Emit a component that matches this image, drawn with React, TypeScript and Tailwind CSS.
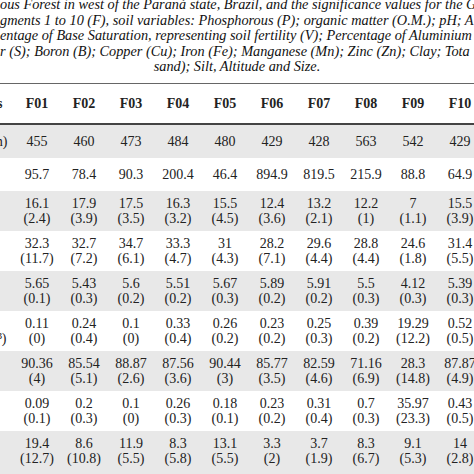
import React from "react"

const cols = ["F01", "F02", "F03", "F04", "F05", "F06", "F07", "F08", "F09", "F10"]

type Row = { label: string; pad: string; tall: boolean; shade: boolean; cells: string[][] }

const rows: Row[] = [
    { label: "Altitude (m)", pad: "pr-[6px]", tall: false, shade: true, cells: ["455", "460", "473", "484", "480", "429", "428", "563", "542", "429"].map((v) => [v]) },
    { label: "Size (ha)", pad: "pr-[18px]", tall: false, shade: false, cells: ["95.7", "78.4", "90.3", "200.4", "46.4", "894.9", "819.5", "215.9", "88.8", "64.9"].map((v) => [v]) },
    { label: "P (mg/dm³)", pad: "pr-[18px]", tall: true, shade: true, cells: [["16.1", "(2.4)"], ["17.9", "(3.9)"], ["17.5", "(3.5)"], ["16.3", "(3.2)"], ["15.5", "(4.5)"], ["12.4", "(3.6)"], ["13.2", "(2.1)"], ["12.2", "(1)"], ["7", "(1.1)"], ["15.5", "(3.9)"]] },
    { label: "O.M. (g/dm³)", pad: "pr-[18px]", tall: true, shade: false, cells: [["32.3", "(11.7)"], ["32.7", "(7.2)"], ["34.7", "(6.1)"], ["33.3", "(4.7)"], ["31", "(4.3)"], ["28.2", "(7.1)"], ["29.6", "(4.4)"], ["28.8", "(4.4)"], ["24.6", "(1.8)"], ["31.4", "(5.5)"]] },
    { label: "pH", pad: "pr-[18px]", tall: true, shade: true, cells: [["5.65", "(0.1)"], ["5.43", "(0.3)"], ["5.6", "(0.2)"], ["5.51", "(0.2)"], ["5.67", "(0.3)"], ["5.89", "(0.2)"], ["5.91", "(0.2)"], ["5.5", "(0.3)"], ["4.12", "(0.3)"], ["5.39", "(0.3)"]] },
    { label: "Al (cmolc/dm³)", pad: "pr-[7px]", tall: true, shade: false, cells: [["0.11", "(0)"], ["0.24", "(0.4)"], ["0.1", "(0)"], ["0.33", "(0.4)"], ["0.26", "(0.2)"], ["0.23", "(0.2)"], ["0.25", "(0.3)"], ["0.39", "(0.2)"], ["19.29", "(12.2)"], ["0.52", "(0.5)"]] },
    { label: "V (%)", pad: "pr-[18px]", tall: true, shade: true, cells: [["90.36", "(4)"], ["85.54", "(5.1)"], ["88.87", "(2.6)"], ["87.56", "(3.6)"], ["90.44", "(3)"], ["85.77", "(3.5)"], ["82.59", "(4.6)"], ["71.16", "(6.9)"], ["28.3", "(14.8)"], ["87.87", "(4.9)"]] },
    { label: "m (%)", pad: "pr-[18px]", tall: true, shade: false, cells: [["0.09", "(0.1)"], ["0.2", "(0.3)"], ["0.1", "(0)"], ["0.26", "(0.3)"], ["0.18", "(0.1)"], ["0.23", "(0.2)"], ["0.31", "(0.4)"], ["0.7", "(0.3)"], ["35.97", "(23.3)"], ["0.43", "(0.5)"]] },
    { label: "S (mg/dm³)", pad: "pr-[18px]", tall: true, shade: true, cells: [["19.4", "(12.7)"], ["8.6", "(10.8)"], ["11.9", "(5.5)"], ["8.3", "(5.8)"], ["13.1", "(5.5)"], ["3.3", "(2)"], ["3.7", "(1.9)"], ["8.3", "(6.7)"], ["9.1", "(5.3)"], ["14", "(2.8)"]] },
]

const caption = [
    "ous Forest in west of the Paraná state, Brazil, and the significance values for the G",
    "gments 1 to 10 (F), soil variables: Phosphorous (P); organic matter (O.M.); pH; A",
    "entage of Base Saturation, representing soil fertility (V); Percentage of Aluminium",
    "r (S); Boron (B); Copper (Cu); Iron (Fe); Manganese (Mn); Zinc (Zn); Clay; Tota",
]

export default function App() {
    return (
        <div className="h-[474px] w-[474px] overflow-hidden bg-white font-['Liberation_Serif',serif] text-[14px] text-[#222]">
            {/* ── Caption ─────────────────────────────────────────── */}
            <div className="mt-[-3px] text-[14.3px] italic leading-[15.5px] text-[#111]">
                {caption.map((line) => (
                    <div key={line} className="whitespace-nowrap">
                        {line}
                    </div>
                ))}
                <div className="text-center whitespace-nowrap">sand); Silt, Altitude and Size.</div>
            </div>

            {/* ── Table ───────────────────────────────────────────── */}
            <div className="mt-[8px] h-px bg-[#666]" />
            <div className="flex h-[39px] items-center font-bold">
                <div className="ml-[-106.5px] w-[120px] shrink-0 pr-[11px] text-right">Variables</div>
                {cols.map((c) => (
                    <div key={c} className="w-[47px] shrink-0 text-center">
                        {c}
                    </div>
                ))}
            </div>
            <div className="h-[2px] bg-[#444]" />

            <div className="leading-[15px]">
                {rows.map((r) => (
                    <div
                        key={r.label}
                        className={`flex items-center ${r.tall ? "h-[40px]" : "h-[33px]"} ${r.shade ? "bg-[#e8e8e8]" : "bg-white"}`}
                    >
                        <div className={`ml-[-106.5px] w-[120px] shrink-0 text-right ${r.pad} ${r.tall ? "pt-[15px]" : ""}`}>
                            {r.label}
                        </div>
                        {r.cells.map((v, i) => (
                            <div key={i} className="flex w-[47px] shrink-0 flex-col items-center whitespace-nowrap">
                                {v.map((t) => (
                                    <span key={t}>{t}</span>
                                ))}
                            </div>
                        ))}
                    </div>
                ))}
                <div className="h-[10px] bg-[#e8e8e8]" />
            </div>
        </div>
    )
}
